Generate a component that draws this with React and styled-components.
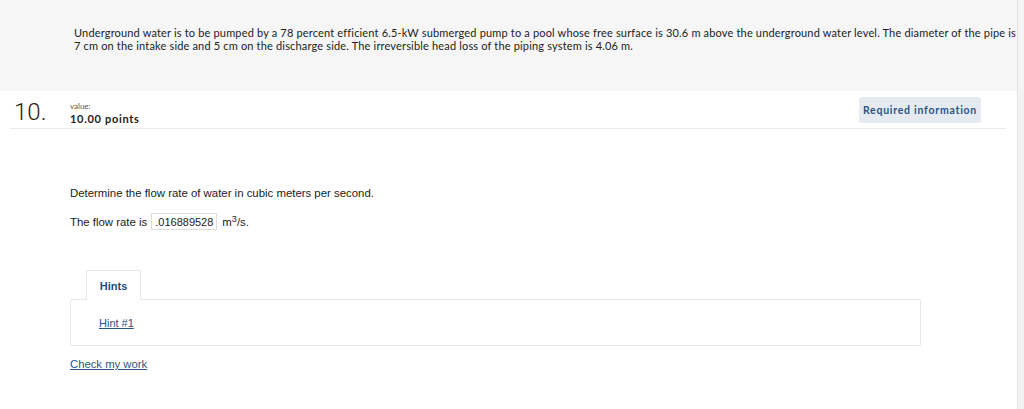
import React from "react";
import styled, { createGlobalStyle } from "styled-components";

const Global = createGlobalStyle`
  html, body { margin: 0; padding: 0; background: #fff; }
  body { font-family: "Liberation Sans", Arial, sans-serif; color: #222; }
`;

const Shell = styled.div`
  display: flex;
  width: 1024px;
  height: 409px;
  overflow: hidden;
`;

const Main = styled.div`
  flex: 1;
  display: flex;
  flex-direction: column;
  min-width: 0;
`;

const Scrollbar = styled.div`
  width: 6px;
  border-left: 1px solid #e4e4e4;
  background: #f3f3f3;
`;

const Stem = styled.div`
  background: #f6f6f6;
  height: 91px;
  box-sizing: border-box;
  padding: 26px 0 0 74px;
`;

const StemText = styled.p`
  margin: 0;
  font-family: Lato, "Open Sans", sans-serif;
  font-size: 11px;
  line-height: 13px;
  letter-spacing: 0.17px;
  color: #222;
  white-space: nowrap;
`;

const QuestionHeader = styled.div`
  display: flex;
  align-items: flex-start;
  margin: 0 11px 0 10px;
  padding: 6px 0 4px 0;
  border-bottom: 1px solid #ececec;
  height: 38px;
  box-sizing: border-box;
`;

const Number = styled.div`
  width: 60px;
  padding-left: 4px;
  padding-top: 3px;
  box-sizing: border-box;
  font-family: Roboto, "Liberation Sans", sans-serif;
  font-weight: 300;
  font-size: 24px;
  line-height: 24px;
  color: #1e1e1e;
`;

const Value = styled.div`
  flex: 1;
  display: flex;
  flex-direction: column;
  padding-top: 4px;
`;

const ValueLabel = styled.span`
  font-family: Lato, sans-serif;
  font-size: 8px;
  line-height: 11px;
  color: #555;
`;

const Points = styled.span`
  font-family: Lato, sans-serif;
  font-weight: 700;
  font-size: 11px;
  line-height: 13px;
  letter-spacing: 0.7px;
  color: #222;
`;

const InfoButton = styled.button`
  border: none;
  background: #e5eaf1;
  border-radius: 3px;
  height: 26px;
  padding: 0 4px;
  margin-right: 25px;
  font-family: Lato, sans-serif;
  font-weight: 700;
  font-size: 10.5px;
  letter-spacing: 0.75px;
  color: #2b5584;
`;

const Body = styled.div`
  padding: 58px 0 0 70px;
  display: flex;
  flex-direction: column;
`;

const Prompt = styled.p`
  margin: 0;
  font-size: 11.4px;
  line-height: 13px;
  color: #222;
`;

const AnswerRow = styled.div`
  display: flex;
  align-items: center;
  margin-top: 13px;
  font-size: 11.4px;
  color: #222;
  gap: 4px;
`;

const AnswerBox = styled.span`
  display: inline-block;
  border: 1px solid #dcdcdc;
  padding: 0 3px;
  height: 17px;
  line-height: 17px;
  font-size: 11px;
  box-sizing: border-box;
  margin: 0 1px 0 0;
`;

const Sup = styled.sup`
  font-size: 9px;
  line-height: 0;
  vertical-align: 4px;
`;

const Tabs = styled.div`
  margin-top: 40px;
  width: 851px;
  display: flex;
  flex-direction: column;
`;

const TabStrip = styled.div`
  display: flex;
  padding-left: 16px;
`;

const Tab = styled.div`
  width: 55px;
  height: 30px;
  box-sizing: border-box;
  border: 1px solid #e7e7e7;
  border-bottom: none;
  background: #fff;
  margin-bottom: -1px;
  position: relative;
  z-index: 1;
  display: flex;
  align-items: center;
  justify-content: center;
  font-size: 11px;
  font-weight: 700;
  color: #1f4b7f;
`;

const Panel = styled.div`
  border: 1px solid #e7e7e7;
  border-radius: 2px;
  height: 47px;
  box-sizing: border-box;
  padding: 13px 0 0 28px;
`;

const Link = styled.a`
  font-size: 11px;
  line-height: 13px;
  color: #2a5688;
  text-decoration: underline;
  cursor: pointer;
`;

const CheckLink = styled(Link)`
  margin-top: 12px;
  align-self: flex-start;
  font-size: 11.3px;
`;

export default function App() {
  return (
    <>
      <Global />
      <Shell>
        <Main>
          <Stem>
            <StemText>
              Underground water is to be pumped by a 78 percent efficient 6.5-kW submerged pump to a pool whose free surface is 30.6 m above the underground water level. The diameter of the pipe is
              <br />
              7 cm on the intake side and 5 cm on the discharge side. The irreversible head loss of the piping system is 4.06 m.
            </StemText>
          </Stem>
          <QuestionHeader>
            <Number>10.</Number>
            <Value>
              <ValueLabel>value:</ValueLabel>
              <Points>10.00 points</Points>
            </Value>
            <InfoButton>Required information</InfoButton>
          </QuestionHeader>
          <Body>
            <Prompt>Determine the flow rate of water in cubic meters per second.</Prompt>
            <AnswerRow>
              <span>The flow rate is</span>
              <AnswerBox>.016889528</AnswerBox>
              <span>
                m<Sup>3</Sup>/s.
              </span>
            </AnswerRow>
            <Tabs>
              <TabStrip>
                <Tab>Hints</Tab>
              </TabStrip>
              <Panel>
                <Link>Hint #1</Link>
              </Panel>
            </Tabs>
            <CheckLink>Check my work</CheckLink>
          </Body>
        </Main>
        <Scrollbar />
      </Shell>
    </>
  );
}
